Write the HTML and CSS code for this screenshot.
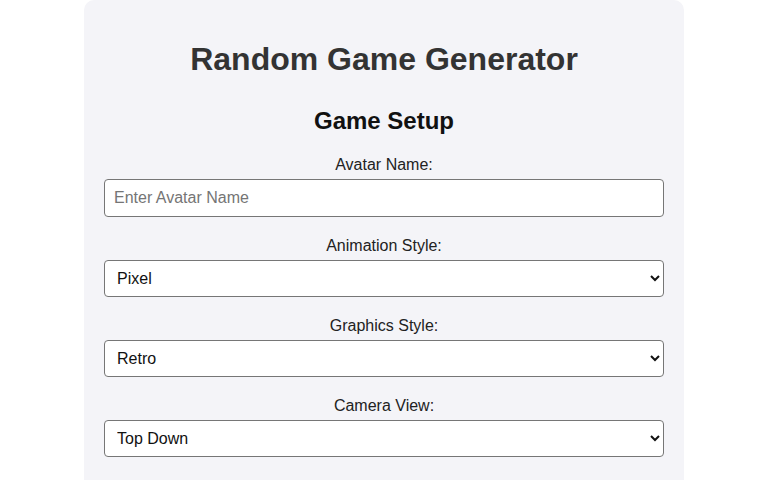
FILE: index.html
```html
<!DOCTYPE html>
<html>
<head>
<meta charset="utf-8">
<link rel="stylesheet" href="styles.css">
</head>
<body>
<div class="container">
  <h1 class="title">Random Game Generator</h1>
  <form class="setup">
    <h2 class="subtitle">Game Setup</h2>
    <div class="field">
      <label class="label" for="avatar">Avatar Name:</label>
      <input class="control" id="avatar" type="text" placeholder="Enter Avatar Name">
    </div>
    <div class="field">
      <label class="label" for="anim">Animation Style:</label>
      <select class="control select" id="anim"><option>Pixel</option></select>
    </div>
    <div class="field">
      <label class="label" for="gfx">Graphics Style:</label>
      <select class="control select" id="gfx"><option>Retro</option></select>
    </div>
    <div class="field">
      <label class="label" for="cam">Camera View:</label>
      <select class="control select" id="cam"><option>Top Down</option></select>
    </div>
  </form>
</div>
</body>
</html>
```
FILE: styles.css
```css
html, body {
  margin: 0;
  padding: 0;
  background: #ffffff;
  font-family: "Liberation Sans", Arial, sans-serif;
}
.container {
  width: 600px;
  box-sizing: border-box;
  margin: 0 auto;
  padding: 41px 20px 40px;
  background: #f4f4f8;
  border-radius: 10px;
  min-height: 520px;
}
.title {
  margin: 0;
  text-align: center;
  font-size: 32px;
  line-height: 37px;
  font-weight: bold;
  color: #333333;
}
.setup {
  display: flex;
  flex-direction: column;
  gap: 19px;
  margin-top: 29px;
}
.subtitle {
  margin: 0 0 1px;
  text-align: center;
  font-size: 24px;
  line-height: 28px;
  font-weight: bold;
  color: #111111;
}
.field {
  display: flex;
  flex-direction: column;
  gap: 5px;
}
.label {
  padding-top: 1px;
  text-align: center;
  font-size: 16px;
  line-height: 18px;
  color: #222222;
}
.control {
  box-sizing: border-box;
  width: 560px;
  height: 38px;
  margin: 0;
  padding: 8px 9px;
  border: 1px solid #767676;
  border-radius: 4px;
  background: #ffffff;
  font-family: "Liberation Sans", Arial, sans-serif;
  font-size: 16px;
  color: #111111;
}
.control::placeholder {
  color: #757575;
}
.select {
  height: 37px;
  padding: 8px;
}
```
